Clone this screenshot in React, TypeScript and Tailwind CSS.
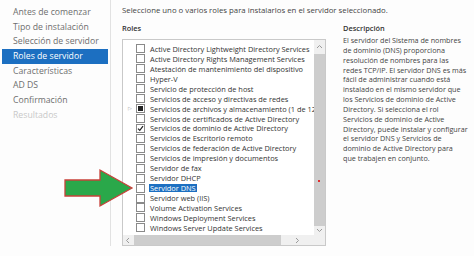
import React from 'react';

type Role = { name: string; state?: 'checked' | 'partial'; expander?: boolean; selected?: boolean };

const navItems = [
    { label: 'Antes de comenzar' },
    { label: 'Tipo de instalación' },
    { label: 'Selección de servidor' },
    { label: 'Roles de servidor', active: true },
    { label: 'Características' },
    { label: 'AD DS' },
    { label: 'Confirmación' },
    { label: 'Resultados', disabled: true },
];

const roles: Role[] = [
    { name: 'Active Directory Lightweight Directory Services' },
    { name: 'Active Directory Rights Management Services' },
    { name: 'Atestación de mantenimiento del dispositivo' },
    { name: 'Hyper-V' },
    { name: 'Servicio de protección de host' },
    { name: 'Servicios de acceso y directivas de redes' },
    { name: 'Servicios de archivos y almacenamiento (1 de 12 in', state: 'partial', expander: true },
    { name: 'Servicios de certificados de Active Directory' },
    { name: 'Servicios de dominio de Active Directory', state: 'checked' },
    { name: 'Servicios de Escritorio remoto' },
    { name: 'Servicios de federación de Active Directory' },
    { name: 'Servicios de impresión y documentos' },
    { name: 'Servidor de fax' },
    { name: 'Servidor DHCP' },
    { name: 'Servidor DNS', selected: true },
    { name: 'Servidor web (IIS)' },
    { name: 'Volume Activation Services' },
    { name: 'Windows Deployment Services' },
    { name: 'Windows Server Update Services' },
];

// wrapped the same way as the dialog does
const descLines = [
    'El servidor del Sistema de nombres',
    'de dominio (DNS) proporciona',
    'resolución de nombres para las',
    'redes TCP/IP. El servidor DNS es más',
    'fácil de administrar cuando está',
    'instalado en el mismo servidor que',
    'los Servicios de dominio de Active',
    'Directory. Si selecciona el rol',
    'Servicios de dominio de Active',
    'Directory, puede instalar y configurar',
    'el servidor DNS y Servicios de',
    'dominio de Active Directory para',
    'que trabajen en conjunto.',
];

const Checkbox: React.FC<{ state?: Role['state'] }> = ({ state }) => (
    <div className="w-[9px] h-[9px] border border-[#8a8a8a] bg-white flex items-center justify-center shrink-0">
        {state === 'partial' && <div className="w-[5px] h-[5px] bg-[#222]" />}
        {state === 'checked' && (
            <svg width="7" height="7" viewBox="0 0 7 7">
                <path d="M1 3.6 L2.8 5.4 L6 1.2" fill="none" stroke="#222" strokeWidth="1.2" />
            </svg>
        )}
    </div>
);

const Chevron: React.FC<{ dir: 'up' | 'down' | 'left' | 'right' }> = ({ dir }) => {
    const d = {
        up: 'M1 4 L3.5 1.5 L6 4',
        down: 'M1 2 L3.5 4.5 L6 2',
        left: 'M4 1 L1.5 3.5 L4 6',
        right: 'M2 1 L4.5 3.5 L2 6',
    }[dir];
    return (
        <svg width="7" height="7" viewBox="0 0 7 7">
            <path d={d} fill="none" stroke="#9a9a9a" strokeWidth="1" />
        </svg>
    );
};

export default function App() {
    return (
        <div className="relative w-[474px] h-[256px] bg-[#fdfdfd] overflow-hidden text-[#333]" style={{ fontFamily: '"Open Sans", "Noto Sans", sans-serif' }}>
            <div className="flex h-[246px]">
                {/* left steps */}
                <div className="w-[111px] shrink-0 border-r border-[#e2e2e2] pt-[5px] pl-[2px] pr-[2px]">
                    {navItems.map((item) => (
                        <div
                            key={item.label}
                            className={`h-[14.7px] pl-[11px] flex items-center text-[8.7px] leading-none whitespace-nowrap ${
                                item.active ? 'bg-[#1c6fc1] text-white' : item.disabled ? 'text-[#c8c8c8]' : 'text-[#6e6e6e]'
                            }`}
                        >
                            {item.label}
                        </div>
                    ))}
                </div>

                {/* main */}
                <div className="flex-1 pl-[11px] pt-[5px] flex flex-col">
                    <p className="text-[7.8px] leading-[10px] text-[#444] whitespace-nowrap">
                        Seleccione uno o varios roles para instalarlos en el servidor seleccionado.
                    </p>
                    <div className="flex mt-[9px] gap-[17px] flex-1">
                        <div className="w-[204px] flex flex-col">
                            <div className="text-[7.4px] font-semibold leading-[9px] text-[#333] h-[15px]">Roles</div>
                            <div className="flex-1 border border-[#c9c9c9] bg-white flex flex-col">
                                <div className="flex flex-1 min-h-0">
                                    <div className="flex-1 overflow-hidden pt-[4px]">
                                        {roles.map((r) => (
                                            <div key={r.name} className="h-[9.95px] flex items-center whitespace-nowrap">
                                                <div className="w-[13px] flex justify-center shrink-0">
                                                    {r.expander && <span className="text-[5px] text-[#999]">▷</span>}
                                                </div>
                                                <Checkbox state={r.state} />
                                                <span
                                                    className={`ml-[4px] text-[7.4px] leading-[8px] px-[1px] ${
                                                        r.selected ? 'bg-[#1c6fc1] text-white' : 'text-[#333]'
                                                    }`}
                                                >
                                                    {r.name}
                                                </span>
                                            </div>
                                        ))}
                                    </div>
                                    {/* vertical scrollbar */}
                                    <div className="w-[11px] shrink-0 bg-[#f0f0f0] flex flex-col items-center">
                                        <div className="h-[14px] flex items-center"><Chevron dir="up" /></div>
                                        <div className="relative w-full flex-1 bg-[#cdcdcd]">
                                            <div className="absolute left-[4px] top-[126px] w-[2px] h-[2px] bg-[#e03030]" />
                                        </div>
                                        <div className="h-[9px] flex items-center"><Chevron dir="down" /></div>
                                    </div>
                                </div>
                                {/* horizontal scrollbar */}
                                <div className="h-[10px] flex shrink-0">
                                    <div className="flex-1 bg-[#f0f0f0] flex items-center">
                                        <div className="w-[11px] flex justify-center"><Chevron dir="left" /></div>
                                        <div className="w-[147px] h-full bg-[#cdcdcd]" />
                                        <div className="flex-1 flex justify-center"><Chevron dir="right" /></div>
                                    </div>
                                    <div className="w-[11px] bg-[#f0f0f0]" />
                                </div>
                            </div>
                        </div>

                        <div className="w-[126px]">
                            <div className="text-[7.4px] font-semibold leading-[9px] text-[#333] h-[12px]">Descripción</div>
                            <div className="text-[7.2px] leading-[9.85px] text-[#444] whitespace-nowrap">
                                {descLines.map((l) => (
                                    <div key={l}>{l}</div>
                                ))}
                            </div>
                        </div>
                    </div>
                </div>
            </div>

            {/* green pointer arrow */}
            <svg className="absolute left-[63px] top-[168px]" width="72" height="40" viewBox="0 0 72 40">
                <polygon points="2,12 37,12 37,2 69,20 37,38 37,28 2,28" fill="#2aa84a" stroke="#c8413a" strokeWidth="1.3" strokeLinejoin="miter" />
            </svg>
        </div>
    );
}
